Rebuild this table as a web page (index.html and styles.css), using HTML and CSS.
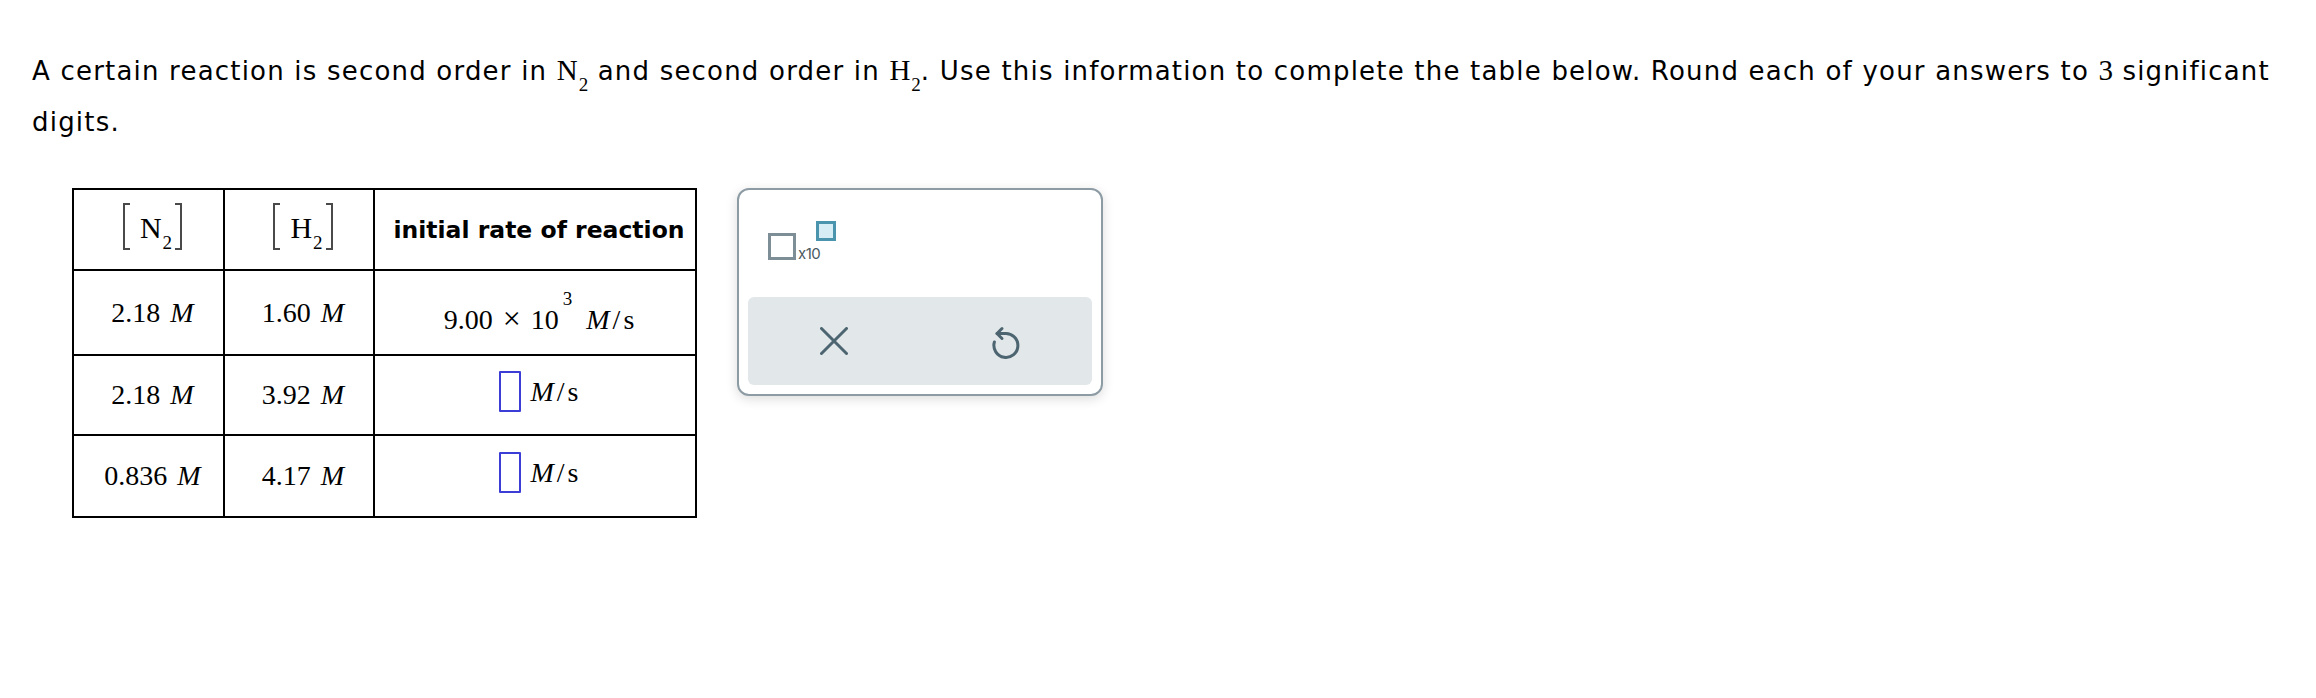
FILE: index.html
```html
<!DOCTYPE html>
<html lang="en">
<head>
<meta charset="utf-8">
<title>Rate law table</title>
<link rel="stylesheet" href="styles.css">
</head>
<body>
<div class="page">
  <p class="prompt"><span>A certain reaction is second order in</span> <span class="m">N<span class="sub">2</span></span> <span>and second order in</span> <span class="m">H<span class="sub">2</span></span><span>. Use this information to complete the table below. Round each of your answers to</span> <span class="m">3</span> <span>significant</span> <span>digits.</span></p>

  <div class="work">
    <table class="data">
      <colgroup>
        <col class="c1"><col class="c2"><col class="c3">
      </colgroup>
      <tr class="r-head">
        <th><span class="conc"><span class="br l"></span><span class="sp">N<span class="hsub">2</span></span><span class="br r"></span></span></th>
        <th><span class="conc"><span class="br l"></span><span class="sp">H<span class="hsub">2</span></span><span class="br r"></span></span></th>
        <th class="rate-h">initial rate of reaction</th>
      </tr>
      <tr class="r1">
        <td><span class="v">2.18<i class="u">M</i></span></td>
        <td><span class="v">1.60<i class="u">M</i></span></td>
        <td><span class="v">9.00<span class="times">×</span>10<span class="exp">3</span><span class="rate-u"><i>M</i><span class="sl">/</span>s</span></span></td>
      </tr>
      <tr class="r2">
        <td><span class="v">2.18<i class="u">M</i></span></td>
        <td><span class="v">3.92<i class="u">M</i></span></td>
        <td><span class="v"><span class="ans"></span><span class="rate-u"><i>M</i><span class="sl">/</span>s</span></span></td>
      </tr>
      <tr class="r3">
        <td><span class="v">0.836<i class="u">M</i></span></td>
        <td><span class="v">4.17<i class="u">M</i></span></td>
        <td><span class="v"><span class="ans"></span><span class="rate-u"><i>M</i><span class="sl">/</span>s</span></span></td>
      </tr>
    </table>

    <div class="panel">
      <div class="tools">
        <div class="sci-btn">
          <span class="base-box"></span>
          <span class="x10">x10</span>
          <span class="exp-box"></span>
        </div>
      </div>
      <div class="actions">
        <button class="act" aria-label="Clear">
          <svg width="28" height="28" viewBox="0 0 28 28"><path d="M1.5 1.5 L26.5 26.5 M26.5 1.5 L1.5 26.5" stroke="#4c6570" stroke-width="3" stroke-linecap="round" fill="none"/></svg>
        </button>
        <button class="act" aria-label="Undo">
          <svg width="34" height="36" viewBox="0 0 34 36"><path d="M8 10.5 H15.5 A12 12 0 1 1 5.4 19" stroke="#4c6570" stroke-width="3" stroke-linecap="round" stroke-linejoin="round" fill="none"/><path d="M13 5.5 L8 10.5 L13 15.5" stroke="#4c6570" stroke-width="3" stroke-linecap="round" stroke-linejoin="round" fill="none"/></svg>
        </button>
      </div>
    </div>
  </div>
</div>
</body>
</html>
```

FILE: styles.css
```css
body {
  margin: 0;
  background: #ffffff;
  color: #000000;
  font-family: "DejaVu Sans", Verdana, sans-serif;
}

.page {
  padding: 46px 32px 0 32px;
}

.prompt {
  margin: 0;
  font-size: 26px;
  letter-spacing: 1.2px;
  line-height: 51px;
}

.m {
  font-family: "Liberation Serif", "Times New Roman", serif;
  font-size: 29px;
  letter-spacing: 0;
  line-height: 1;
}

.sub {
  font-size: 19px;
  position: relative;
  top: 11px;
  margin-left: 1px;
}

.work {
  display: flex;
  align-items: flex-start;
  gap: 40px;
  margin-top: 40px;
  padding-left: 40px;
}

.data {
  border-collapse: collapse;
  table-layout: fixed;
  width: 623px;
  font-family: "Liberation Serif", "Times New Roman", serif;
  font-size: 28px;
}

.c1 { width: 151px; }
.c2 { width: 150px; }
.c3 { width: 322px; }

.data th,
.data td {
  border: 2px solid #000;
  padding: 0 0 0 8px;
  text-align: center;
  vertical-align: middle;
  white-space: nowrap;
}

.r-head th { height: 79px; }
.r1 td { height: 83px; }
.r2 td { height: 78px; }
.r3 td { height: 80px; }

.rate-h {
  font-family: "DejaVu Sans", Verdana, sans-serif;
  font-size: 23.5px;
  font-weight: bold;
}

.conc {
  display: inline-flex;
  align-items: center;
}

.br {
  display: inline-block;
  width: 5px;
  height: 43px;
  border: 2px solid #4a4a4a;
}
.br.l { border-right: none; margin-right: 10px; }
.br.r { border-left: none; margin-left: 3px; }

.sp {
  font-family: "Liberation Serif", "Times New Roman", serif;
  font-size: 30px;
  font-weight: normal;
  line-height: 1;
  position: relative;
  top: 2px;
}

.hsub {
  font-size: 19px;
  position: relative;
  top: 11px;
  margin-left: 1px;
}

.v {
  display: inline-block;
}

.u {
  margin-left: 10px;
}

.times {
  margin: 0 10px;
  font-size: 32px;
}

.exp {
  font-size: 19px;
  vertical-align: 24px;
  margin-left: 4px;
}

.rate-u {
  margin-left: 14px;
}

.sl {
  margin: 0 3px 0 3px;
}

.ans {
  display: inline-block;
  width: 22px;
  height: 41px;
  box-sizing: border-box;
  border: 2px solid #3c3cd6;
  border-radius: 1px;
  vertical-align: middle;
  margin-right: 9px;
  position: relative;
  top: -4px;
}

.ans + .rate-u {
  margin-left: 0;
}

.panel {
  box-sizing: border-box;
  width: 366px;
  height: 208px;
  border: 2px solid #8d9ca4;
  border-radius: 12px;
  background: #ffffff;
  box-shadow: 0 3px 12px rgba(0, 0, 0, 0.14);
  padding: 0 9px 9px 9px;
  display: flex;
  flex-direction: column;
}

.tools {
  height: 107px;
  position: relative;
}

.sci-btn {
  position: absolute;
  left: 20px;
  top: 31px;
  width: 80px;
  height: 42px;
}

.base-box {
  position: absolute;
  left: 0;
  top: 12px;
  width: 28px;
  height: 27px;
  box-sizing: border-box;
  border: 3px solid #7d8e96;
}

.x10 {
  position: absolute;
  left: 30px;
  top: 23px;
  font-family: "Inter", "DejaVu Sans", sans-serif;
  font-size: 15px;
  color: #4a5a62;
  letter-spacing: -0.5px;
}

.exp-box {
  position: absolute;
  left: 48px;
  top: 0;
  width: 20px;
  height: 20px;
  box-sizing: border-box;
  border: 3px solid #4b94ae;
  background: #d6edf6;
}

.actions {
  flex: 1;
  display: flex;
  background: #e2e7ea;
  border-radius: 6px;
}

.act {
  flex: 1;
  border: none;
  background: transparent;
  padding: 0;
  display: flex;
  align-items: center;
  justify-content: center;
}
```
